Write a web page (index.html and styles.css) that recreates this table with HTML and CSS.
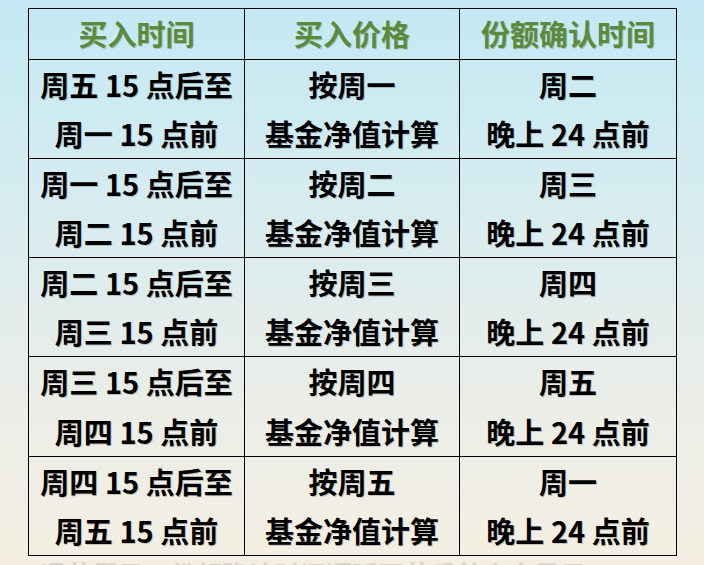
FILE: index.html
```html
<!DOCTYPE html>
<html lang="zh-CN">
<head>
<meta charset="utf-8">
<link rel="stylesheet" href="styles.css">
</head>
<body>
<div class="page">
  <table class="fund">
    <colgroup>
      <col class="c1"><col class="c2"><col class="c3">
    </colgroup>
    <thead>
      <tr><th>买入时间</th><th>买入价格</th><th>份额确认时间</th></tr>
    </thead>
    <tbody>
      <tr><td>周五 15 点后至<br>周一 15 点前</td><td>按周一<br>基金净值计算</td><td>周二<br>晚上 24 点前</td></tr>
      <tr><td>周一 15 点后至<br>周二 15 点前</td><td>按周二<br>基金净值计算</td><td>周三<br>晚上 24 点前</td></tr>
      <tr><td>周二 15 点后至<br>周三 15 点前</td><td>按周三<br>基金净值计算</td><td>周四<br>晚上 24 点前</td></tr>
      <tr><td>周三 15 点后至<br>周四 15 点前</td><td>按周四<br>基金净值计算</td><td>周五<br>晚上 24 点前</td></tr>
      <tr><td>周四 15 点后至<br>周五 15 点前</td><td>按周五<br>基金净值计算</td><td>周一<br>晚上 24 点前</td></tr>
    </tbody>
  </table>
  <p class="note">遇节假日，份额确认时间顺延至节后首个交易日。</p>
</div>
</body>
</html>
```

FILE: styles.css
```css
html, body {
  margin: 0;
  padding: 0;
}
body {
  width: 704px;
  height: 565px;
  overflow: hidden;
  background: linear-gradient(180deg, #c3e9f4 0%, #d6ecf0 35%, #e8ede9 65%, #f5efe2 100%);
  font-family: "Noto Sans CJK SC", "Noto Sans", sans-serif;
}
.page {
  padding: 8px 0 0 28px;
}
.fund {
  border-collapse: collapse;
  width: 648px;
  table-layout: fixed;
}
.c1 { width: 216px; }
.c2 { width: 215px; }
.c3 { width: 217px; }
.fund th,
.fund td {
  border: 1.5px solid #000;
  text-align: center;
  font-weight: 700;
  font-size: 29px;
  padding: 0;
}
.fund th {
  height: 49.5px;
  line-height: 49.5px;
  color: #5c8a3b;
  text-shadow: 1px 1px 0.5px rgba(60, 70, 40, 0.25);
}
.fund td {
  height: 98.3px;
  line-height: 49.15px;
  color: #000;
  text-shadow: 1px 1px 0.5px rgba(0, 0, 0, 0.2);
}
.note {
  margin: 1px 0 0 12px;
  width: 620px;
  font-size: 26px;
  font-weight: 700;
  color: #d6d1c9;
  line-height: 34px;
}
```
